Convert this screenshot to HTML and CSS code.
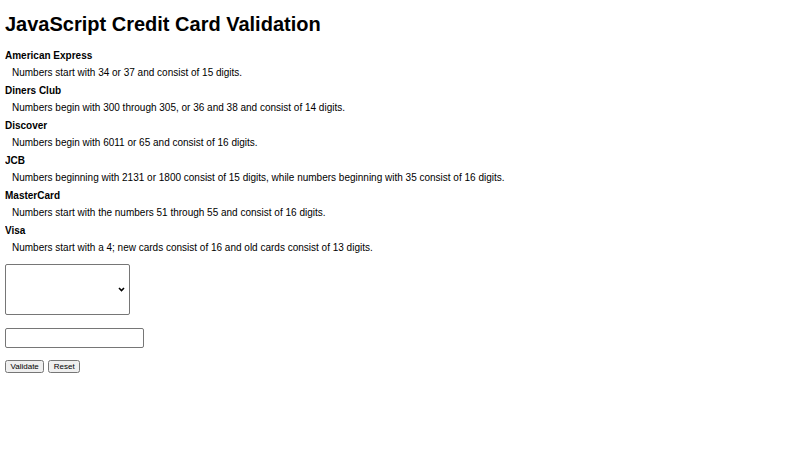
FILE: index.html
```html
<!DOCTYPE html>
<html>
<head>
<meta charset="utf-8">
<title>JavaScript Credit Card Validation</title>
<link rel="stylesheet" href="styles.css">
</head>
<body>
<h1 class="title">JavaScript Credit Card Validation</h1>
<dl class="cards">
  <dt>American Express</dt>
  <dd>Numbers start with 34 or 37 and consist of 15 digits.</dd>
  <dt>Diners Club</dt>
  <dd>Numbers begin with 300 through 305, or 36 and 38 and consist of 14 digits.</dd>
  <dt>Discover</dt>
  <dd>Numbers begin with 6011 or 65 and consist of 16 digits.</dd>
  <dt>JCB</dt>
  <dd>Numbers beginning with 2131 or 1800 consist of 15 digits, while numbers beginning with 35 consist of 16 digits.</dd>
  <dt>MasterCard</dt>
  <dd>Numbers start with the numbers 51 through 55 and consist of 16 digits.</dd>
  <dt>Visa</dt>
  <dd>Numbers start with a 4; new cards consist of 16 and old cards consist of 13 digits.</dd>
</dl>
<form class="form">
  <div class="row row-select"><select class="type"></select></div>
  <div class="row row-input"><input class="number" type="text"></div>
  <div class="buttons"><button type="button" class="btn">Validate</button><button type="reset" class="btn">Reset</button></div>
</form>
</body>
</html>
```
FILE: styles.css
```css
body {
  margin: 5px;
  font-family: "Liberation Sans", Arial, sans-serif;
  font-size: 10px;
  color: #000;
  background: #fff;
}
.title {
  font-size: 20px;
  font-weight: bold;
  margin: 7px 0 11px;
  line-height: 24px;
}
.cards {
  margin: 0;
}
.cards dt {
  font-weight: bold;
  line-height: 17px;
  margin: 0;
}
.cards dd {
  margin: 0 0 0 7px;
  line-height: 18px;
}
.form {
  margin-top: 7px;
}
.row {
  line-height: 0;
}
.row-select {
  margin-bottom: 13px;
}
.row-input {
  margin-bottom: 12px;
}
.type {
  -webkit-appearance: none;
  appearance: none;
  width: 125px;
  height: 51px;
  box-sizing: border-box;
  margin: 0;
  font-size: 9px;
  vertical-align: top;
  border: 1px solid #767676;
  border-radius: 2px;
  background-color: #fff;
  background-image: url("data:image/svg+xml,%3Csvg xmlns='http://www.w3.org/2000/svg' width='7' height='5' viewBox='0 0 7 5'%3E%3Cpath d='M1 1 L3.5 3.5 L6 1' fill='none' stroke='%23000' stroke-width='1.6'/%3E%3C/svg%3E");
  background-repeat: no-repeat;
  background-position: right 4px center;
  background-size: 7px 5px;
}
.number {
  width: 139px;
  height: 20px;
  box-sizing: border-box;
  margin: 0;
  font-size: 9px;
  vertical-align: top;
  border: 1px solid #767676;
  border-radius: 2px;
}
.buttons {
  display: flex;
  gap: 4px;
}
.btn {
  font-family: "Liberation Sans", Arial, sans-serif;
  font-size: 8px;
  margin: 0;
  padding: 0 3.5px;
  height: 13px;
  line-height: 10px;
}
```
